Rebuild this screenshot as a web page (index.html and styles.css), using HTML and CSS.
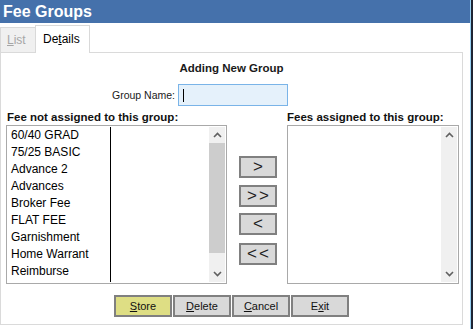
FILE: index.html
```html
<!DOCTYPE html>
<html>
<head>
<meta charset="utf-8">
<link rel="stylesheet" href="styles.css">
</head>
<body>
<div class="screen">
  <div class="window">
    <div class="titlebar">Fee Groups</div>
    <div class="tabs">
      <div class="tab tab-list"><u>L</u>ist</div>
      <div class="tab tab-details">De<u>t</u>ails</div>
    </div>
    <div class="panel">
      <div class="heading">Adding New Group</div>
      <div class="name-row">
        <span class="name-label">Group Name:</span>
        <div class="name-input"><span class="caret"></span></div>
      </div>
      <div class="lists">
        <div class="list-label">Fee not assigned to this group:</div>
        <div></div>
        <div class="list-label list-label-right">Fees assigned to this group:</div>
        <div class="listbox">
          <div class="items">
            <div>60/40 GRAD</div>
            <div>75/25 BASIC</div>
            <div>Advance 2</div>
            <div>Advances</div>
            <div>Broker Fee</div>
            <div>FLAT FEE</div>
            <div>Garnishment</div>
            <div>Home Warrant</div>
            <div>Reimburse</div>
          </div>
          <div class="fill"></div>
          <div class="scrollbar">
            <div class="arrow"><svg width="9" height="6" viewBox="0 0 9 6"><polyline points="1,5 4.5,1.5 8,5" fill="none" stroke="#606060" stroke-width="1.6"/></svg></div>
            <div class="thumb"></div>
            <div class="track"></div>
            <div class="arrow"><svg width="9" height="6" viewBox="0 0 9 6"><polyline points="1,1 4.5,4.5 8,1" fill="none" stroke="#606060" stroke-width="1.6"/></svg></div>
          </div>
        </div>
        <div class="movers">
          <div class="btn mover m1">&gt;</div>
          <div class="btn mover m2 dbl">&gt;&gt;</div>
          <div class="btn mover m3">&lt;</div>
          <div class="btn mover m4 dbl">&lt;&lt;</div>
        </div>
        <div class="listbox">
          <div class="fill"></div>
          <div class="scrollbar">
            <div class="arrow"><svg width="9" height="6" viewBox="0 0 9 6"><polyline points="1,5 4.5,1.5 8,5" fill="none" stroke="#606060" stroke-width="1.6"/></svg></div>
            <div class="track"></div>
            <div class="arrow"><svg width="9" height="6" viewBox="0 0 9 6"><polyline points="1,1 4.5,4.5 8,1" fill="none" stroke="#606060" stroke-width="1.6"/></svg></div>
          </div>
        </div>
      </div>
      <div class="actions">
        <div class="btn action store"><u>S</u>tore</div>
        <div class="btn action"><u>D</u>elete</div>
        <div class="btn action"><u>C</u>ancel</div>
        <div class="btn action">E<u>x</u>it</div>
      </div>
    </div>
  </div>
  <div class="edge"></div>
</div>
</body>
</html>
```

FILE: styles.css
```css
html, body {
  margin: 0;
  padding: 0;
}
body {
  background: #1e2433;
  font-family: "Liberation Sans", Arial, sans-serif;
  color: #111;
}
.screen {
  display: flex;
  width: 473px;
  height: 329px;
  overflow: hidden;
}
.window {
  width: 470px;
  height: 329px;
  background: #fff;
  display: flex;
  flex-direction: column;
}
.edge {
  width: 1px;
  height: 329px;
  background: #96cff2;
}
.titlebar {
  height: 23px;
  background: #4571ab;
  color: #fff;
  font-weight: bold;
  font-size: 16px;
  line-height: 23px;
  padding-left: 3px;
}
.tabs {
  height: 29px;
  display: flex;
  align-items: flex-end;
}
.tab {
  box-sizing: border-box;
  font-size: 12px;
}
.tab-list {
  width: 35px;
  height: 25px;
  background: #f0f0f0;
  border: 1px solid #d9d9d9;
  border-right: none;
  border-bottom: none;
  color: #a6a6a6;
  padding-left: 6px;
  line-height: 24px;
}
.tab-details {
  width: 55px;
  height: 28px;
  margin-bottom: -1px;
  position: relative;
  z-index: 1;
  background: #fff;
  border: 1px solid #d9d9d9;
  border-bottom: none;
  padding-left: 7px;
  line-height: 26px;
  color: #000;
}
.panel {
  box-sizing: border-box;
  width: 463px;
  height: 273px;
  border: 1px solid #dadada;
  display: flex;
  flex-direction: column;
}
.heading {
  margin-top: 8px;
  height: 14px;
  line-height: 14px;
  text-align: center;
  font-weight: bold;
  font-size: 11.5px;
  color: #1a1a1a;
}
.name-row {
  margin-top: 9px;
  height: 22px;
  display: flex;
  align-items: center;
  padding-left: 100px;
}
.name-label {
  width: 74px;
  text-align: right;
  font-size: 10.5px;
  margin-right: 3px;
  color: #1a1a1a;
}
.name-input {
  box-sizing: border-box;
  width: 110px;
  height: 22px;
  background: #e5f1fb;
  border: 1px solid #7ab4e8;
  display: flex;
  align-items: center;
  padding-left: 4px;
}
.caret {
  width: 1px;
  height: 13px;
  background: #000;
}
.lists {
  margin-top: 4px;
  margin-left: 5px;
  display: grid;
  grid-template-columns: 221px 60px 172px;
  grid-template-rows: 15px 159px;
}
.list-label {
  font-weight: bold;
  font-size: 11.5px;
  line-height: 14px;
  padding-left: 1px;
  color: #111;
  white-space: nowrap;
}
.list-label-right {
  padding-left: 0;
}
.listbox {
  box-sizing: border-box;
  border: 1px solid #a9a9a9;
  display: flex;
  background: #fff;
}
.items {
  box-sizing: border-box;
  width: 104px;
  margin: 1px 0;
  border-right: 1px solid #000;
  padding-left: 4px;
  font-size: 12px;
  line-height: 17px;
  color: #000;
}
.fill {
  flex: 1;
}
.scrollbar {
  width: 16px;
  margin: 1px 1px 1px 0;
  background: #f0f0f0;
  display: flex;
  flex-direction: column;
}
.arrow {
  height: 16px;
  display: flex;
  align-items: center;
  justify-content: center;
}
.thumb {
  height: 110px;
  background: #cdcdcd;
}
.track {
  flex: 1;
}
.movers {
  display: flex;
  flex-direction: column;
  padding-left: 12px;
}
.btn {
  box-sizing: border-box;
  background: #d9d9d9;
  border: 2px solid #808080;
  display: flex;
  align-items: center;
  justify-content: center;
  color: #111;
}
.mover {
  width: 38px;
  height: 22px;
  font-size: 17px;
  line-height: 16px;
  color: #222;
}
.dbl {
  letter-spacing: 2px;
  padding-left: 2px;
}
.m1 { margin-top: 31px; }
.m2 { margin-top: 7px; }
.m3 { margin-top: 6px; }
.m4 { margin-top: 8px; }
.actions {
  margin-top: 11px;
  display: flex;
  justify-content: center;
  gap: 1px;
}
.action {
  width: 58px;
  height: 22px;
  font-size: 11px;
}
.store {
  background: #dede84;
}
```
